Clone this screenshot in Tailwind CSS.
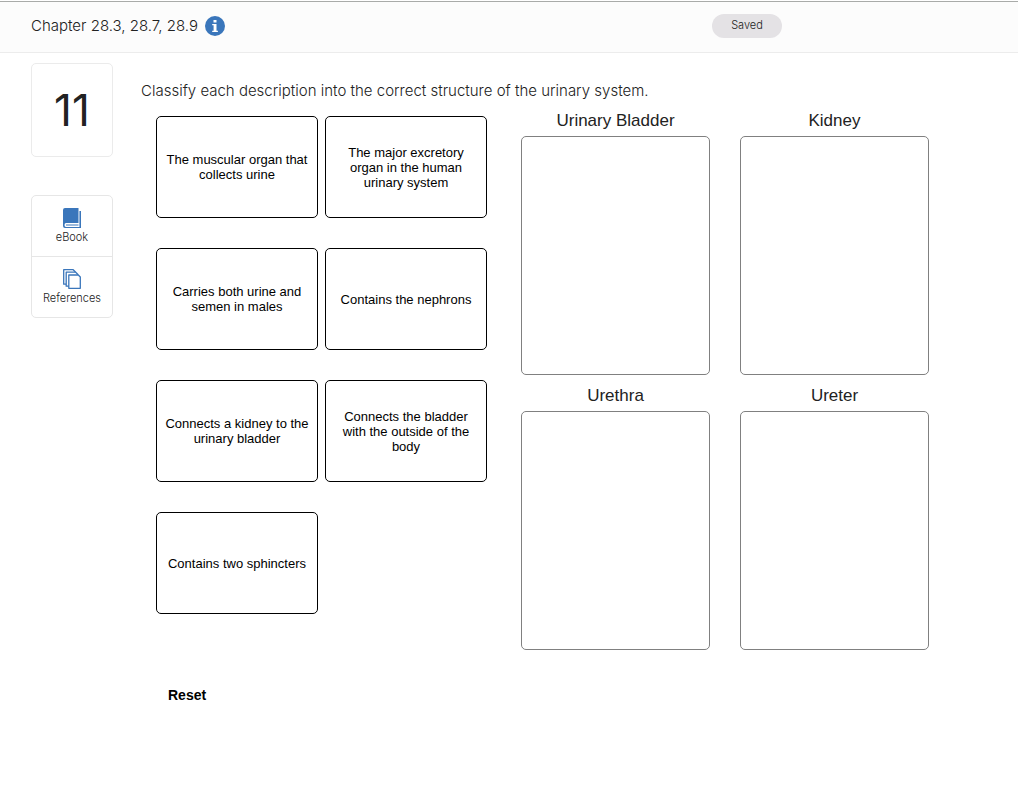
<!DOCTYPE html>
<html lang="en">
<head>
<meta charset="utf-8">
<meta name="viewport" content="width=device-width, initial-scale=1">
<title>Chapter 28.3, 28.7, 28.9</title>
<script src="https://cdn.jsdelivr.net/npm/@tailwindcss/browser@4"></script>
</head>
<body class="min-h-screen bg-white font-[Inter,sans-serif] text-[#222]">
<header class="mt-px flex h-[52px] items-center border-t border-b border-t-[#a9aba9] border-b-[#ececec] bg-[#fcfcfc] pr-[236px] pb-[3px] pl-[31px]">
  <h1 class="pt-0.5 text-[15px] font-light">Chapter 28.3, 28.7, 28.9</h1>
  <button type="button" aria-label="Assignment information" class="ml-[7px]">
    <svg class="size-5" viewBox="0 0 20 20" aria-hidden="true"><circle cx="10" cy="10" r="10" fill="#3a76bb"/><path fill="#fff" d="M8.500 4h3v2.600h-3zM7.200 8h4.300v6.700h1.400V16H7.200v-1.300h1.400V9.300H7.200z"/></svg>
  </button>
  <span role="status" class="ml-auto flex h-6 w-[70px] items-center justify-center rounded-full bg-[#e4e2e5] text-[11px] font-light">Saved</span>
</header>
<div class="flex pt-[10px] pl-[31px]">
  <aside class="w-[82px] shrink-0">
    <div class="flex h-[94px] items-center justify-center rounded-[5px] border border-[#ebebeb] text-[44px]">11</div>
    <nav class="mt-[38px] divide-y divide-[#e6e6e6] rounded-[5px] border border-[#e6e6e6] text-[11px] font-light">
      <a href="#ebook" class="flex h-[61px] flex-col items-center pt-3">
        <svg class="h-5 w-[18px]" viewBox="0 0 18 20" aria-hidden="true"><path fill="#3a76bb" d="M2 0h13.500v15H3Q1.500 15 1.500 17T3 19H16.500V3H18v17H2Q0 20 0 18V2Q0 0 2 0z"/><path fill="none" stroke="#3a76bb" d="M3 17h12.500"/><path fill="none" stroke="#8db0d8" d="M16.500 3v15.500"/></svg>
        <span class="leading-[18px]">eBook</span>
      </a>
      <a href="#references" class="flex h-[60px] flex-col items-center pt-3">
        <svg class="h-5 w-[18px]" viewBox="0 0 18 20" fill="#fff" stroke="#3a76bb" stroke-width="1.300" stroke-linejoin="round" aria-hidden="true"><path d="M.700.700h9.500l2 2v12.500H.700z"/><path d="M3.200 3.200h9.500l2 2v12H3.200z"/><path d="M5.800 6h9.500l2 2v11.300H5.800z"/></svg>
        <span class="leading-[18px]">References</span>
      </a>
    </nav>
  </aside>
  <main class="ml-7 min-w-0 flex-1">
    <p class="pt-[18px] text-[15px] leading-5 font-light">Classify each description into the correct structure of the urinary system.</p>
    <div class="flex items-start pl-[15px] font-['Liberation_Sans',Arial,sans-serif] text-black">
      <section aria-label="Descriptions" class="pt-[15px]">
        <div class="grid grid-cols-[162px_162px] auto-rows-[102px] gap-x-[7px] gap-y-[30px] text-[13px] leading-[15px]">
          <button type="button" class="rounded-[5px] border border-black px-2">The muscular organ that collects urine</button>
          <button type="button" class="rounded-[5px] border border-black px-2">The major excretory organ in the human urinary system</button>
          <button type="button" class="rounded-[5px] border border-black px-2">Carries both urine and semen in males</button>
          <button type="button" class="rounded-[5px] border border-black px-2">Contains the nephrons</button>
          <button type="button" class="rounded-[5px] border border-black px-2">Connects a kidney to the urinary bladder</button>
          <button type="button" class="rounded-[5px] border border-black px-2">Connects the bladder with the outside of the body</button>
          <button type="button" class="rounded-[5px] border border-black px-2">Contains two sphincters</button>
        </div>
        <button type="button" class="mt-[71px] ml-3 text-[14px] font-bold">Reset</button>
      </section>
      <section aria-label="Structures" class="ml-[34px] grid grid-cols-[189px_189px] gap-x-[30px] gap-y-[6px] pt-[5px] text-center text-[17px] leading-[30px] text-[#222]">
        <div><h2>Urinary Bladder</h2><div class="h-[239px] rounded-[5px] border border-[#808080]"></div></div>
        <div><h2>Kidney</h2><div class="h-[239px] rounded-[5px] border border-[#808080]"></div></div>
        <div><h2>Urethra</h2><div class="h-[239px] rounded-[5px] border border-[#808080]"></div></div>
        <div><h2>Ureter</h2><div class="h-[239px] rounded-[5px] border border-[#808080]"></div></div>
      </section>
    </div>
  </main>
</div>
</body>
</html>
